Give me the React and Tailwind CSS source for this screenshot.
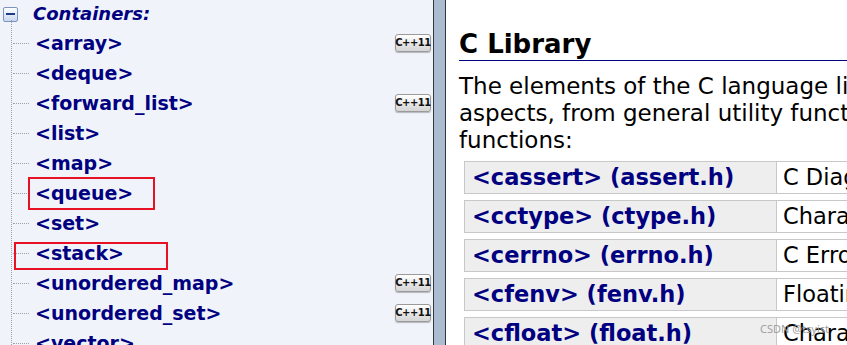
import React from "react";

const items = [
  { name: "<array>", cpp11: true },
  { name: "<deque>" },
  { name: "<forward_list>", cpp11: true },
  { name: "<list>" },
  { name: "<map>" },
  { name: "<queue>", box: "left-[28px] w-[127px] top-[-1px] h-[33px]" },
  { name: "<set>" },
  { name: "<stack>", box: "left-[14px] w-[154px] top-[4px] h-[28px]" },
  { name: "<unordered_map>", cpp11: true },
  { name: "<unordered_set>", cpp11: true },
  { name: "<vector>" },
];

const rows = [
  ["<cassert> (assert.h)", "C Diagnostics Library"],
  ["<cctype> (ctype.h)", "Character handling functions"],
  ["<cerrno> (errno.h)", "C Errors"],
  ["<cfenv> (fenv.h)", "Floating-point environment"],
  ["<cfloat> (float.h)", "Characteristics of floating-point types"],
];

function Badge() {
  return (
    <div className="h-[18px] w-[36px] rounded-[3px] border border-[#9a9a9a] bg-gradient-to-b from-white to-[#d4d4d4] shadow-[0_1px_1px_rgba(0,0,0,0.25)] flex items-center justify-center text-[10px] font-bold leading-none text-[#111] tracking-[-0.5px]">
      C++11
    </div>
  );
}

export default function App() {
  const font = { fontFamily: '"DejaVu Sans", Verdana, sans-serif' };
  return (
    <div className="relative w-[847px] h-[345px] overflow-hidden flex bg-white" style={font}>
      {/* left tree pane */}
      <div className="w-[433px] shrink-0 h-full bg-[#f0f4fa] relative overflow-hidden">
        <div className="absolute left-[11px] top-[20px] bottom-0 border-l border-dotted border-[#a0a0a0]" />
        <div className="flex items-center h-[28px] pl-[3px]">
          <div className="w-[15px] h-[15px] border border-[#7c94c0] rounded-[2px] bg-gradient-to-b from-white to-[#c9d6ee] flex items-center justify-center">
            <div className="w-[9px] h-[2px] bg-[#1f3a8a]" />
          </div>
          <span className="ml-[15px] text-[18px] font-bold italic text-[#000080] leading-none">
            Containers:
          </span>
        </div>
        {items.map((it) => (
          <div key={it.name} className="relative flex items-center h-[30px] pr-[2px]">
            <div className="ml-[13px] w-[16px] border-t border-dotted border-[#a0a0a0]" />
            <span className="ml-[6px] flex-1 text-[19px] font-bold text-[#000080] leading-none whitespace-nowrap">
              {it.name}
            </span>
            {it.box && <div className={`absolute border-2 border-[#e81123] ${it.box}`} />}
            {it.cpp11 && <Badge />}
          </div>
        ))}
      </div>
      {/* splitter */}
      <div className="w-[13px] shrink-0 h-full bg-[#abbcd0] border-l border-r border-[#303840]" />
      {/* right content */}
      <div className="flex-1 min-w-0 h-full overflow-hidden pl-[13px] pt-[29px]">
        <h2 className="text-[26px] font-bold text-black leading-[30px] border-b border-[#000080] pb-[1px] whitespace-nowrap">
          C Library
        </h2>
        <p className="mt-[12px] text-[23px] leading-[27px] text-black whitespace-nowrap">
          The elements of the C language library are also included as a subset of the C++ Standard library.
          <br />
          aspects, from general utility functions and macros to input/output functions and dynamic memory
          <br />
          functions:
        </p>
        <div className="mt-[7px] ml-[5px] flex flex-col gap-[6px]">
          {rows.map(([a, b]) => (
            <div key={a} className="flex h-[33px] w-[800px] border border-[#c8c8c8]">
              <div className="w-[312px] shrink-0 bg-[#eeeeee] border-r border-[#c8c8c8] flex items-center pl-[7px] text-[22.5px] font-bold text-[#000080] whitespace-nowrap">
                {a}
              </div>
              <div className="flex-1 flex items-center pl-[6px] text-[22.5px] text-black whitespace-nowrap">
                {b}
              </div>
            </div>
          ))}
        </div>
      </div>
      <div className="absolute left-[760px] top-[323px] text-[11px] leading-none text-[#a0a0a0]" style={{ fontFamily: '"Noto Sans", sans-serif' }}>
        CSDN @tsyist
      </div>
    </div>
  );
}
